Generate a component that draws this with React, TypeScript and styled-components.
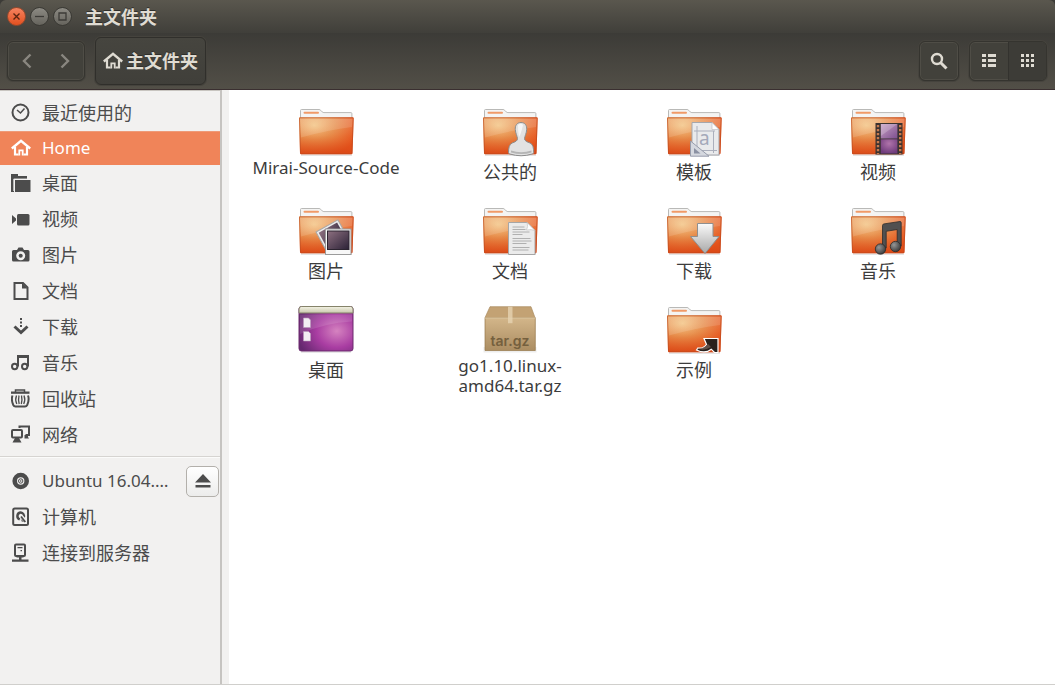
import React from "react";
import styled, { createGlobalStyle } from "styled-components";

const GlobalStyle = createGlobalStyle`
  *, *::before, *::after { box-sizing: border-box; }
  html, body, #root { height: 100%; }
  body {
    margin: 0;
    background: #3c3b37;
    font-family: "Noto Sans", "Noto Sans CJK SC", sans-serif;
    font-size: 18px;
    color: #4c4c4c;
  }
  button { font: inherit; color: inherit; cursor: pointer; }
  ul { margin: 0; padding: 0; list-style: none; }
`;

const Window = styled.div`
  display: flex;
  flex-direction: column;
  min-height: 100%;
`;

const TitleBar = styled.header`
  display: flex;
  align-items: center;
  gap: 4px;
  height: 33px;
  padding: 0 7px 1px;
  background: linear-gradient(#5a574e, #403f3a);
  border-radius: 6px 6px 0 0;
`;

const WindowButton = styled.button<{ $close?: boolean }>`
  display: grid;
  place-items: center;
  width: 19px;
  height: 19px;
  padding: 0;
  border: 1px solid ${(p) => (p.$close ? "#9a4a2c" : "#3a3934")};
  border-radius: 50%;
  background: ${(p) =>
    p.$close ? "linear-gradient(#f58360, #e2501f)" : "linear-gradient(#8c8a83, #66645d)"};
  color: ${(p) => (p.$close ? "#5a2410" : "#3c3b37")};
`;

const Title = styled.h1`
  margin: 0 0 0 9px;
  padding-top: 1px;
  font-size: 18px;
  line-height: 24px;
  font-weight: 700;
  color: #dfdbd2;
  text-shadow: 0 -1px 0 #2f2e2a;
`;

const Toolbar = styled.nav`
  display: flex;
  align-items: center;
  gap: 10px;
  height: 57px;
  padding: 0 8px 1px 7px;
  background: linear-gradient(#3c3b37, #524f47);
  border-bottom: 1px solid #3a2f30;
`;

const ButtonGroup = styled.div`
  display: flex;
  height: 40px;
  border: 1px solid #35342f;
  border-radius: 6px;
  background: #42413b;
  box-shadow: inset 0 0 0 1px #4f4d46, 0 0 0 1px #45433d;
  overflow: hidden;
`;

const ToolButton = styled.button<{ $active?: boolean; $dim?: boolean }>`
  display: grid;
  place-items: center;
  width: 38px;
  padding: 0;
  border: 0;
  background: ${(p) => (p.$active ? "#3d3c37" : "transparent")};
  box-shadow: ${(p) => (p.$active ? "inset 1px 0 0 #33322e" : "none")};
  color: ${(p) => (p.$dim ? "#8a8780" : "#dfdbd2")};
`;

const PathButton = styled.button`
  display: flex;
  align-items: center;
  gap: 3px;
  height: 48px;
  padding: 0 7px;
  border: 1px solid #302f2b;
  border-radius: 6px;
  background: linear-gradient(#46453f, #403f3a);
  box-shadow: 0 0 0 1px #45433d;
  font-weight: 700;
  line-height: 24px;
  color: #dfdbd2;
  text-shadow: 0 -1px 0 #2f2e2a;
`;

const Spacer = styled.div`
  flex: 1;
`;

const Body = styled.div`
  display: flex;
  flex: 1;
  border-bottom: 1px solid #d0cfcc;
`;

const Sidebar = styled.aside`
  flex: none;
  width: 222px;
  background: #f2f1f0;
  border-top: 1px solid #c8c5c0;
  border-right: 2px solid #c6c4c1;
`;

const PlaceList = styled.ul`
  padding: 4px 0 3px;

  & + & {
    padding-top: 6px;
    border-top: 1px solid #d6d4d1;
    box-shadow: inset 0 1px 0 #fbfbfa;
  }
`;

const PlaceRow = styled.li<{ $selected?: boolean }>`
  display: flex;
  align-items: center;
  height: ${(p) => (p.$selected ? 34 : 36)}px;
  padding-right: 1px;
  background: ${(p) => (p.$selected ? "#f08459" : "transparent")};
  box-shadow: ${(p) => (p.$selected ? "inset 0 1px 0 #ee9a78" : "none")};
`;

const PlaceLink = styled.a<{ $selected?: boolean; $latin?: boolean }>`
  display: flex;
  align-items: center;
  flex: 1;
  min-width: 0;
  gap: 11px;
  padding-left: 11px;
  font-size: ${(p) => (p.$latin ? 17 : 18)}px;
  line-height: 28px;
  color: ${(p) => (p.$selected ? "#ffffff" : "#4c4c4c")};
  text-decoration: none;
  white-space: nowrap;

  svg { flex: none; }
`;

const EjectButton = styled.button`
  display: grid;
  place-items: center;
  width: 33px;
  height: 31px;
  padding: 0;
  border: 1px solid #b3b0ab;
  border-radius: 5px;
  background: linear-gradient(#ffffff, #ececeb);
  color: #4c4c4c;
`;

const Gutter = styled.div`
  flex: none;
  width: 7px;
  background: #f2f1f0;
`;

const FileGrid = styled.main`
  display: grid;
  flex: 1;
  grid-template-columns: repeat(auto-fill, 184px);
  align-content: start;
  row-gap: 21px;
  padding: 18px 5px;
  background: #ffffff;
`;

const FileItem = styled.a`
  display: flex;
  flex-direction: column;
  align-items: center;
  min-height: 78px;
  color: #3c3c3c;
  text-decoration: none;
`;

const FileLabel = styled.span<{ $latin?: boolean }>`
  max-width: 160px;
  font-size: ${(p) => (p.$latin ? 17 : 18)}px;
  line-height: ${(p) => (p.$latin ? 20 : 28)}px;
  text-align: center;
`;

const HomeGlyph = () => (
  <svg width="20" height="20" viewBox="0 0 20 20" fill="none" stroke="currentColor">
    <path d="M.8 10.500 10 2.800l9.200 7.700" strokeWidth="2.300" />
    <path d="M4 9v7.500h3.500M16 9v7.500h-3.500" strokeWidth="2.200" />
    <path d="M8.300 17.600v-5.300h3.400v5.300" strokeWidth="1.800" />
  </svg>
);

const Glyph = ({ children }: { children: React.ReactNode }) => (
  <svg width="20" height="20" viewBox="0 0 20 20" fill="currentColor" stroke="none">
    {children}
  </svg>
);

const outline = { fill: "none", stroke: "currentColor", strokeWidth: 2 };

const glyphs: Record<string, React.ReactNode> = {
  recent: (
    <Glyph>
      <circle cx="9.500" cy="9.500" r="8" {...outline} />
      <path d="m6 7 3.500 3L13.500 5.500" {...outline} strokeWidth={1.5} />
    </Glyph>
  ),
  home: <HomeGlyph />,
  desktop: (
    <Glyph>
      <path d="M0 1h7v2h9v3H3v13H0z" />
      <path d="M4 7h15.500v12H4z" />
      <path d="M2.700 18V6H18" fill="none" stroke="#f2f1f0" strokeWidth=".8" />
    </Glyph>
  ),
  video: (
    <Glyph>
      <path d="M1 6 5 9.500v2L1 15z" />
      <rect x="6" y="5" width="12.500" height="11.500" rx="1.500" />
    </Glyph>
  ),
  pictures: (
    <Glyph>
      <path
        fillRule="evenodd"
        d="M2.500 5H6l1.500-2.500h4L13 5h4q1.500 0 1.500 1.500V15q0 1.500-1.500 1.500H2.500Q1 16.500 1 15V6.500Q1 5 2.500 5zM9.700 6.200a4.500 4.500 0 1 0 0 9 4.500 4.500 0 0 0 0-9z"
      />
      <circle cx="9.700" cy="10.700" r="2" />
    </Glyph>
  ),
  documents: (
    <Glyph>
      <path d="M3.500 2H12l4.500 4.500V18h-13z" {...outline} />
      <path d="M11 2v5.500h5.500z" />
    </Glyph>
  ),
  downloads: (
    <Glyph>
      <path d="M9 1h2v2H9zM9 4.500h2v2H9zM9 8h2v2H9z" />
      <path d="m3.500 9.500 6.500 6 6.500-6" {...outline} strokeWidth={3} />
    </Glyph>
  ),
  music: (
    <Glyph>
      <circle cx="3.700" cy="13.500" r="2.700" {...outline} />
      <circle cx="13.700" cy="13.500" r="2.700" {...outline} />
      <path d="M7 13.500V3h10v10.500" {...outline} />
      <path d="M6 2h12v3H6z" />
    </Glyph>
  ),
  trash: (
    <Glyph>
      <path d="M4.500 3V1h9v2" {...outline} strokeWidth={1.5} />
      <path d="M0 2.500h18.500v2.300H0z" />
      <path d="M1.500 6.500C.3 9.500 1 13 2.300 16q.7 1.500 2.200 1.500h9.500q1.500 0 2.200-1.500c1.300-3 2-6.500.8-9.500" {...outline} />
      <path
        d="M5.500 6.500Q3.800 11 5.800 15M8 6.500q-1 4.500.2 8.500M10.500 6.500q1 4.500-.2 8.500M13 6.500q1.700 4.500-.3 8.500"
        {...outline}
        strokeWidth={1.3}
      />
    </Glyph>
  ),
  network: (
    <Glyph>
      <rect x="1" y="5" width="10" height="7.500" rx="1" {...outline} />
      <path d="M8.500 3V1.500H18v8.500h-3.500" {...outline} />
      <path d="M4 13h4l2.500 4.500h-9zM13.500 10h3.500v2l1 1.500h-4.500z" />
    </Glyph>
  ),
  disc: (
    <Glyph>
      <circle cx="9.700" cy="10" r="6" {...outline} strokeWidth={4.6} />
      <circle cx="9.700" cy="10" r="2.200" {...outline} strokeWidth={1} />
      <circle cx="9.700" cy="10" r=".8" />
    </Glyph>
  ),
  computer: (
    <Glyph>
      <rect x="2.200" y="1.500" width="14.800" height="16.500" rx="1.500" {...outline} />
      <path
        fillRule="evenodd"
        d="M9.800 4.200a4.800 4.800 0 0 0-1.500 9.300l1-2.300a2.200 2.200 0 1 1 2.700-2.700l1.800 2.200A4.800 4.800 0 0 0 9.800 4.200z"
      />
      <path d="m10 9.500 4.300 5.500" {...outline} strokeWidth={1.8} />
      <path d="M9.500 12.500h2l1.500 2.500h-2z" opacity=".6" />
    </Glyph>
  ),
  server: (
    <Glyph>
      <rect x="4" y="1.500" width="10" height="11.500" rx="1" {...outline} />
      <path d="M6.500 4h5v1.300h-5zM9.500 7H11v1.300H9.500zM8 14h2.500v3H8zM1 16.500h16.500v2.200H1z" />
      <path d="M5.500 13h7v1.500h-7z" />
    </Glyph>
  ),
};

const Folder = ({ id, children }: { id: string; children?: React.ReactNode }) => (
  <svg width="56" height="50" viewBox="0 0 56 50">
    <defs>
      <radialGradient id={`${id}-f`} cx=".28" cy=".22" r=".85">
        <stop offset="0" stopColor="#f4c886" />
        <stop offset=".45" stopColor="#e8914f" />
        <stop offset="1" stopColor="#e8501c" />
      </radialGradient>
      <linearGradient id={`${id}-g`} x1="0" y1="0" x2="0" y2="1">
        <stop offset="0" stopColor="#ffffff" stopOpacity=".12" />
        <stop offset=".5" stopColor="#e06020" stopOpacity=".12" />
        <stop offset="1" stopColor="#d64514" stopOpacity=".7" />
      </linearGradient>
      <linearGradient id={`${id}-m`} x1="0" y1="0" x2="0" y2="1">
        <stop offset="0" stopColor="#fafafa" />
        <stop offset="1" stopColor="#a8a8a8" />
      </linearGradient>
    </defs>
    <path d="M3 46.500h51v1.500H3z" fill="#000" opacity=".1" />
    <path
      d="M2.500 12V2.500q0-1 1-1H21q1 0 1.700.8l1.500 1.600q.7.700 1.700.7h27q1 0 1 1V12z"
      fill="#f4f4f3"
      stroke="#b9b9b7"
    />
    <rect x="5.500" y="3.800" width="15.500" height="2" rx="1" fill="#f09a68" />
    <path d="M1 10q0-.7.700-.7h53.300q.7 0 .7.700L54.500 45.300q0 1-1 1h-50.500q-1 0-1-1z" fill={`url(#${id}-f)`} />
    <path
      d="M1.500 10.500q0-.7.700-.7h52.300q.7 0 .7.700L54 45q0 .8-.8.800H3.300q-.8 0-.8-.8z"
      fill={`url(#${id}-g)`}
      stroke="#b8461c"
      strokeOpacity=".6"
    />
    <path d="M2 11h52.500l-.5 8Q30 22 3 29.500z" fill="#fff" opacity=".13" />
    {children}
  </svg>
);

const PublicIcon = () => (
  <Folder id="public">
    <path
      d="M39 14.500c4 0 6 3 5.700 7-.3 4-1.700 6-2.200 9 0 2.500 2.500 3.300 5.500 4.500 3 1.300 3.700 5 3.700 9.500q0 1-1.500 1.500-11 3.500-22.400 0-1.300-.5-1.300-1.500c0-4.500.7-8.200 3.700-9.500 3-1.200 5.300-2 5.300-4.500-.5-3-1.900-5-2.200-9-.3-4 1.700-7 5.700-7z"
      fill="#e2e2e2"
      stroke="#8c8c8c"
    />
    <path d="M36 17q3-2.500 5 0-2 9-4 12-1-6-1-12z" fill="#fff" opacity=".7" />
    <path d="M29 42.500q10 3.500 20.500 0v2q-10 3-20.500 0z" fill="#b5b5b5" />
  </Folder>
);

const TemplatesIcon = () => (
  <Folder id="templates">
    <path d="M26 14.500h20l7 7V47H26z" fill="#e9eaec" stroke="#a5a7ad" />
    <path d="M46 14.500v7h7z" fill="#fff" stroke="#b5b7bd" strokeWidth=".6" />
    <path d="M31 18v25M47.500 23v22M28 23h21M28 42.500h23" stroke="#abafbc" strokeWidth="1" />
    <text x="33" y="37" fontFamily="Noto Sans" fontSize="19" fill="#a4a9ba">a</text>
    <path d="M24.500 33v15.200H43z" fill="#d5d8df" stroke="#979cab" />
    <path d="M28 40v5.500h6.500z" fill="#8b91a3" />
  </Folder>
);

const VideosIcon = () => (
  <Folder id="videos">
    <defs>
      <linearGradient id="videos-s" x1="0" y1="0" x2="1" y2="1">
        <stop offset="0" stopColor="#c7a0c4" />
        <stop offset="1" stopColor="#7d4f8e" />
      </linearGradient>
      <radialGradient id="videos-t" cx=".5" cy=".3" r=".7">
        <stop offset="0" stopColor="#b074ab" />
        <stop offset="1" stopColor="#6f3b7c" />
      </radialGradient>
    </defs>
    <rect x="25.500" y="15" width="27" height="31.500" fill="#3a3230" />
    <path d="M28 17v29M50.200 17v29" stroke="#c67a4e" strokeWidth="2.400" strokeDasharray="2.200 1.800" />
    <rect x="30.800" y="16" width="16.600" height="14.500" fill="url(#videos-s)" />
    <rect x="30.800" y="31.300" width="16.600" height="14.200" fill="url(#videos-t)" />
    <path d="M30.800 16h16.600L30.800 28z" fill="#fff" opacity=".2" />
  </Folder>
);

const PicturesIcon = () => (
  <Folder id="pictures">
    <defs>
      <linearGradient id="pictures-s" x1="0" y1="0" x2="1" y2="1">
        <stop offset="0" stopColor="#8d7080" />
        <stop offset="1" stopColor="#2b2136" />
      </linearGradient>
    </defs>
    <g transform="rotate(-29 18 25)">
      <rect x="18" y="25" width="25" height="24" fill="#ececec" stroke="#a8a8a8" />
      <rect x="20" y="27" width="21" height="17" fill="url(#pictures-s)" />
    </g>
    <rect x="27.500" y="22" width="25.500" height="25.500" fill="#f7f7f7" stroke="#9b9b9b" />
    <rect x="29.500" y="24" width="21.500" height="18.500" fill="url(#pictures-s)" stroke="#2c2430" />
  </Folder>
);

const DocumentsIcon = () => (
  <Folder id="documents">
    <path d="M26.500 15.500H45l8 8v24H26.500z" fill="#ebebeb" stroke="#a6a6a6" />
    <path d="M45 15.500q1.500 4-.5 7.500 5-1 8.500.5z" fill="#fff" stroke="#bdbdbd" strokeWidth=".6" />
    <path
      d="M30.500 20h12M30.500 22.500h13M30.500 25h17M30.500 27.500h10M30.500 31.500h18M30.500 34h19M30.500 36.500h14M30.500 40.500h17M30.500 43h16"
      stroke="#b0b0b0"
    />
  </Folder>
);

const DownloadsIcon = () => (
  <Folder id="downloads">
    <path d="M31.500 16.500h15.500v13h6L39 46.500l-14.500-17h7z" fill="url(#downloads-m)" stroke="#8f8f8f" />
  </Folder>
);

const MusicIcon = () => (
  <Folder id="music">
    <defs>
      <radialGradient id="music-n" cx=".35" cy=".35" r=".7">
        <stop offset="0" stopColor="#969696" />
        <stop offset="1" stopColor="#3a3a3a" />
      </radialGradient>
    </defs>
    <path d="M32.500 41V18.500q0-1.300 1.500-1.600l16-2.400q1.200 0 1.200 1.200V39h-4V22.500l-11 1.800V41z" fill="#505050" stroke="#2c2c2c" strokeWidth=".8" />
    <circle cx="30.500" cy="42" r="5.200" fill="url(#music-n)" stroke="#2c2c2c" strokeWidth=".8" />
    <circle cx="45.500" cy="39.500" r="5.200" fill="url(#music-n)" stroke="#2c2c2c" strokeWidth=".8" />
  </Folder>
);

const ExamplesIcon = () => (
  <Folder id="examples">
    <path
      d="M38 32.500h14v14h-3.500l-3.200-3.300q-6 5-14.800.8l1.500-2q5 1 8.500-3.500z"
      fill="#2a211d"
      stroke="#fff"
      strokeWidth="1.200"
    />
    <path d="M31 42q6 4 14-1l-3-3q-4 5-11 4z" fill="#7a655b" opacity=".7" />
  </Folder>
);

const DesktopIcon = () => (
  <svg width="56" height="50" viewBox="0 0 56 50">
    <defs>
      <radialGradient id="desk-p" cx=".7" cy=".55" r=".75">
        <stop offset="0" stopColor="#d583c0" />
        <stop offset=".5" stopColor="#a93da2" />
        <stop offset="1" stopColor="#64286f" />
      </radialGradient>
      <linearGradient id="desk-t" x1="0" y1="0" x2="0" y2="1">
        <stop offset="0" stopColor="#f4f3e4" />
        <stop offset="1" stopColor="#c9c8ae" />
      </linearGradient>
    </defs>
    <path d="M3 45.500h50v1.300H3z" fill="#000" opacity=".12" />
    <rect x="1" y=".5" width="54" height="44.500" rx="2.500" fill="url(#desk-p)" stroke="#6c2a6e" />
    <path d="M1 7V3Q1 .5 3.500 .5h49Q55 .5 55 3v4z" fill="url(#desk-t)" stroke="#85836a" />
    <path d="M2 8.500h52v7Q26 17 2 28z" fill="#fff" opacity=".12" />
    <path d="M5.500 12h5l2 2v7.500h-7zM5.500 25.500h5l2 2V35h-7z" fill="#f3eef3" stroke="#b79aba" strokeWidth=".6" />
  </svg>
);

const ArchiveIcon = () => (
  <svg width="56" height="50" viewBox="0 0 56 50">
    <defs>
      <linearGradient id="box-b" x1="0" y1="0" x2="0" y2="1">
        <stop offset="0" stopColor="#d3b68a" />
        <stop offset="1" stopColor="#ab8d62" />
      </linearGradient>
    </defs>
    <path d="M1.500 41h53v5.500h-53z" fill="#000" opacity=".07" />
    <path d="M8 .7h41l4 11H3z" fill="#c3a274" stroke="#a98a5f" strokeWidth=".7" />
    <path d="M3 11.700h50.300V44.500H3z" fill="url(#box-b)" stroke="#957748" strokeWidth=".7" />
    <path d="M3 12h50.300" stroke="#e4cfa9" />
    <path d="M26 .7h4.500v16.500H26z" fill="#e6d3b2" opacity=".8" />
    <text x="28" y="39.500" textAnchor="middle" fontFamily="Inter, sans-serif" fontWeight="600" fontSize="14" fill="#75603e">
      tar.gz
    </text>
  </svg>
);

type Place = { label: string; icon: string; latin?: boolean; selected?: boolean; eject?: boolean };

const places: Place[] = [
  { label: "最近使用的", icon: "recent" },
  { label: "Home", icon: "home", latin: true, selected: true },
  { label: "桌面", icon: "desktop" },
  { label: "视频", icon: "video" },
  { label: "图片", icon: "pictures" },
  { label: "文档", icon: "documents" },
  { label: "下载", icon: "downloads" },
  { label: "音乐", icon: "music" },
  { label: "回收站", icon: "trash" },
  { label: "网络", icon: "network" },
];

const devices: Place[] = [
  { label: "Ubuntu 16.04.…", icon: "disc", latin: true, eject: true },
  { label: "计算机", icon: "computer" },
  { label: "连接到服务器", icon: "server" },
];

const files: { label: string; icon: React.ReactNode; latin?: boolean }[] = [
  { label: "Mirai-Source-Code", icon: <Folder id="plain" />, latin: true },
  { label: "公共的", icon: <PublicIcon /> },
  { label: "模板", icon: <TemplatesIcon /> },
  { label: "视频", icon: <VideosIcon /> },
  { label: "图片", icon: <PicturesIcon /> },
  { label: "文档", icon: <DocumentsIcon /> },
  { label: "下载", icon: <DownloadsIcon /> },
  { label: "音乐", icon: <MusicIcon /> },
  { label: "桌面", icon: <DesktopIcon /> },
  { label: "go1.10.linux-amd64.tar.gz", icon: <ArchiveIcon />, latin: true },
  { label: "示例", icon: <ExamplesIcon /> },
];

const Places = ({ items }: { items: Place[] }) => (
  <PlaceList>
    {items.map((p) => (
      <PlaceRow key={p.label} $selected={p.selected}>
        <PlaceLink href="#" $selected={p.selected} $latin={p.latin}>
          {glyphs[p.icon]}
          {p.label}
        </PlaceLink>
        {p.eject && (
          <EjectButton aria-label="弹出">
            <svg width="18" height="16" viewBox="0 0 18 16" fill="currentColor">
              <path d="M9 1l8 8.500H1zM1.500 12h15v2.500h-15z" />
            </svg>
          </EjectButton>
        )}
      </PlaceRow>
    ))}
  </PlaceList>
);

export default function App() {
  return (
    <Window>
      <GlobalStyle />
      <TitleBar>
        <WindowButton $close aria-label="关闭">
          <svg width="9" height="9" viewBox="0 0 9 9" stroke="currentColor" strokeWidth="1.400">
            <path d="m1.500 1.500 6 6m0-6-6 6" />
          </svg>
        </WindowButton>
        <WindowButton aria-label="最小化">
          <svg width="9" height="9" viewBox="0 0 9 9" stroke="currentColor" strokeWidth="1.300">
            <path d="M0 4.500h9" />
          </svg>
        </WindowButton>
        <WindowButton aria-label="最大化">
          <svg width="9" height="9" viewBox="0 0 9 9" fill="none" stroke="currentColor" strokeWidth="1.300">
            <path d="M1 1h7v7H1z" />
          </svg>
        </WindowButton>
        <Title>主文件夹</Title>
      </TitleBar>
      <Toolbar>
        <ButtonGroup>
          <ToolButton $dim aria-label="后退">
            <svg width="10" height="16" viewBox="0 0 10 16" fill="none" stroke="currentColor" strokeWidth="2.400">
              <path d="M8.500 1.500 2 8l6.500 6.500" />
            </svg>
          </ToolButton>
          <ToolButton $dim aria-label="前进">
            <svg width="10" height="16" viewBox="0 0 10 16" fill="none" stroke="currentColor" strokeWidth="2.400">
              <path d="M1.500 1.500 8 8l-6.500 6.500" />
            </svg>
          </ToolButton>
        </ButtonGroup>
        <PathButton>
          <HomeGlyph />
          主文件夹
        </PathButton>
        <Spacer />
        <ButtonGroup>
          <ToolButton aria-label="搜索">
            <svg width="18" height="18" viewBox="0 0 18 18" fill="none" stroke="currentColor">
              <circle cx="7" cy="7" r="5" strokeWidth="2.400" />
              <path d="m10.500 10.500 6 6" strokeWidth="3" />
            </svg>
          </ToolButton>
        </ButtonGroup>
        <ButtonGroup>
          <ToolButton aria-label="列表视图">
            <svg width="14" height="13" viewBox="0 0 14 13" fill="currentColor">
              <path d="M0 0h4v3H0zM6 0h8v3H6zM0 5h4v3H0zM6 5h8v3H6zM0 10h4v3H0zM6 10h8v3H6z" />
            </svg>
          </ToolButton>
          <ToolButton $active aria-label="图标视图">
            <svg width="13" height="13" viewBox="0 0 13 13" fill="currentColor">
              <path d="M0 0h3v3H0zM5 0h3v3H5zM10 0h3v3h-3zM0 5h3v3H0zM5 5h3v3H5zM10 5h3v3h-3zM0 10h3v3H0zM5 10h3v3H5zM10 10h3v3h-3z" />
            </svg>
          </ToolButton>
        </ButtonGroup>
      </Toolbar>
      <Body>
        <Sidebar>
          <Places items={places} />
          <Places items={devices} />
        </Sidebar>
        <Gutter />
        <FileGrid>
          {files.map((f) => (
            <FileItem key={f.label} href="#">
              {f.icon}
              <FileLabel $latin={f.latin}>{f.label}</FileLabel>
            </FileItem>
          ))}
        </FileGrid>
      </Body>
    </Window>
  );
}
